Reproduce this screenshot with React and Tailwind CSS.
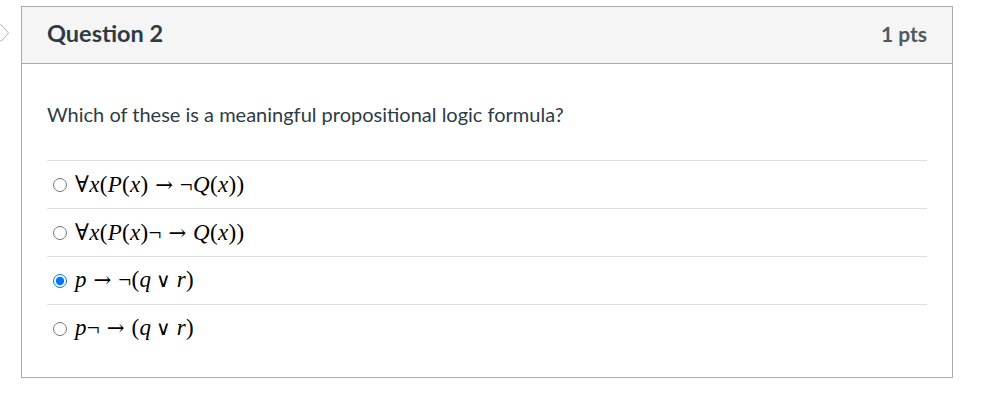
import { useState } from "react";

const I = ({ children }) => <span className="italic">{children}</span>;
const Op = ({ children }) => (
  <span style={{ fontFamily: "'DejaVu Serif', serif" }} className="text-[0.92em]">
    {children}
  </span>
);
const Rel = ({ children }) => (
  <span className="mx-[0.29em]">
    <Op>{children}</Op>
  </span>
);
const Bin = ({ children }) => (
  <span className="mx-[0.222em]">
    <span style={{ fontFamily: "'DejaVu Sans', sans-serif" }} className="text-[0.85em] font-light">
      {children}
    </span>
  </span>
);

const options = [
  {
    id: "a",
    math: (
      <>
        ∀<I>x</I>(<I>P</I>(<I>x</I>)<Rel>→</Rel>¬<I>Q</I>(<I>x</I>))
      </>
    ),
  },
  {
    id: "b",
    math: (
      <>
        ∀<I>x</I>(<I>P</I>(<I>x</I>)¬<Rel>→</Rel><I>Q</I>(<I>x</I>))
      </>
    ),
  },
  {
    id: "c",
    math: (
      <>
        <I>p</I>
        <Rel>→</Rel>¬(<I>q</I>
        <Bin>∨</Bin>
        <I>r</I>)
      </>
    ),
  },
  {
    id: "d",
    math: (
      <>
        <I>p</I>¬<Rel>→</Rel>(<I>q</I>
        <Bin>∨</Bin>
        <I>r</I>)
      </>
    ),
  },
];

function Chevron() {
  return (
    <svg
      className="absolute left-0 top-[24px]"
      width="10"
      height="18"
      viewBox="0 0 10 18"
    >
      <path
        d="M-3 1 H1.5 L8.5 9 L1.5 17 H-3 Z"
        fill="white"
        stroke="#aab4bb"
        strokeWidth="1"
        strokeLinejoin="round"
      />
    </svg>
  );
}

export default function App() {
  const [answer, setAnswer] = useState("c");

  return (
    <div
      className="relative bg-white pt-[6px] pl-[21px] pr-[28px] pb-[38px] text-[#2d3b45]"
      style={{ fontFamily: "Lato, 'Liberation Sans', sans-serif" }}
    >
      <Chevron />
      <div className="border border-[#aaaaaa]">
        <div className="h-[57px] bg-[#f5f5f5] border-b border-[#aaaaaa] px-[25px] flex items-center justify-between">
          <h2 className="text-[23.5px] font-bold text-[#2d3b45] pb-[2px]">Question 2</h2>
          <div className="text-[21px] font-bold text-[#4d5a63] pb-[2px]">1 pts</div>
        </div>

        <div className="px-[25px] pt-[36px] pb-[25px]">
          <p className="text-[20px] leading-[28px]">
            Which of these is a meaningful propositional logic formula?
          </p>

          <div className="mt-[32px]">
            {options.map((o) => (
              <label
                key={o.id}
                className="h-[48px] border-t border-[#dddddd] flex items-center cursor-pointer"
              >
                <input
                  type="radio"
                  name="q2"
                  checked={answer === o.id}
                  onChange={() => setAnswer(o.id)}
                  className="ml-[6px] mr-[8px] w-[14px] h-[14px]"
                />
                <span
                  className="text-[23px] leading-[28px] text-black tracking-[0.3px]"
                  style={{
                    fontFamily: "'Liberation Serif', 'DejaVu Serif', serif",
                  }}
                >
                  {o.math}
                </span>
              </label>
            ))}
          </div>
        </div>
      </div>
    </div>
  );
}
